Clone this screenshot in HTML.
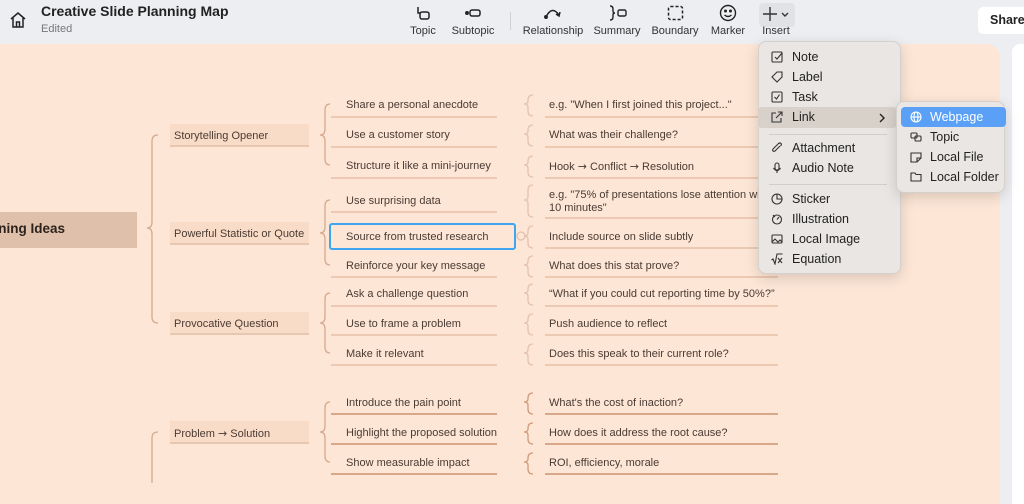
<!DOCTYPE html>
<html><head><meta charset="utf-8"><style>
*{margin:0;padding:0;box-sizing:border-box}
body{width:1024px;height:483px;overflow:hidden;background:#eceef1;font-family:"Liberation Sans",sans-serif;position:relative;color:#3c2f28}
.a{position:absolute;white-space:nowrap}
.tb{font-size:11px;color:#333;text-align:center;width:80px;margin-left:-40px}
.canvas{position:absolute;left:0;top:44px;width:1000px;height:460px;background:#fde6d6;border-top-right-radius:14px;overflow:hidden}
.l1{position:absolute;left:170px;width:139px;height:23px;background:#f9dcc8;border-bottom:2px solid #e8c7b1;font-size:11px;padding:6px 4px;color:#4a3b33}
.t{position:absolute;font-size:11px;color:#4a3b33;white-space:nowrap;margin-top:2px}
.ar{font-family:"DejaVu Sans",sans-serif;font-size:11px}
.u2{position:absolute;left:331px;width:166px;height:2px;background:#ecc9b2}
.u3{position:absolute;left:545px;width:233px;height:2px;background:#ecc9b2}
.menu{position:absolute;background:#e9e6e3;border:1px solid #d4d0cc;border-radius:8px;box-shadow:0 4px 14px rgba(0,0,0,.15);font-size:12.5px;color:#222}
.mi{position:absolute;left:33px}
.ic{position:absolute;left:12px;width:12px;height:12px}
</style></head><body>
<svg class="a" style="left:9px;top:11px" width="18" height="18" viewBox="0 0 18 18" fill="none" stroke="#222" stroke-width="1.5"><path d="M2 8 L9 2 L16 8 M4 7 V16 H14 V7 M7.5 16 V11 H10.5 V16"/></svg>
<div class="a" style="left:41px;top:3px;font-size:14px;font-weight:bold;color:#222">Creative Slide Planning Map</div>
<div class="a" style="left:41px;top:23px;font-size:11px;color:#777">Edited</div>

<svg class="a" style="left:414px;top:6px" width="18" height="16" viewBox="0 0 18 16" fill="none" stroke="#222" stroke-width="1.5"><path d="M4 1 V7 H7"/><rect x="6" y="6" width="9" height="7" rx="2"/></svg>
<div class="a tb" style="left:423px;top:25px">Topic</div>
<svg class="a" style="left:464px;top:6px" width="18" height="16" viewBox="0 0 18 16" fill="none" stroke="#222" stroke-width="1.5"><circle cx="3" cy="7" r="1.2" fill="#222"/><rect x="6" y="4" width="10" height="6" rx="2"/></svg>
<div class="a tb" style="left:473px;top:25px">Subtopic</div>
<div class="a" style="left:510px;top:12px;width:1px;height:18px;background:#d0d0d0"></div>
<svg class="a" style="left:543px;top:5px" width="20" height="16" viewBox="0 0 20 16" fill="none" stroke="#222" stroke-width="1.5"><path d="M3 12 Q9 0 16 10"/><path d="M13 9 L16 11 L17 7"/><circle cx="3" cy="12" r="1.2" fill="#222"/></svg>
<div class="a tb" style="left:553px;top:25px">Relationship</div>
<svg class="a" style="left:608px;top:5px" width="20" height="16" viewBox="0 0 20 16" fill="none" stroke="#222" stroke-width="1.4"><path d="M2 1 Q5 1 5 4 V6 Q5 8 7 8 Q5 8 5 10 V12 Q5 15 2 15"/><rect x="10" y="5" width="8" height="6" rx="1.5"/></svg>
<div class="a tb" style="left:617px;top:25px">Summary</div>
<svg class="a" style="left:667px;top:5px" width="17" height="16" viewBox="0 0 17 16" fill="none" stroke="#222" stroke-width="1.5" stroke-dasharray="3 2"><rect x="1.5" y="1.5" width="14" height="13" rx="2"/></svg>
<div class="a tb" style="left:675px;top:25px">Boundary</div>
<svg class="a" style="left:719px;top:4px" width="18" height="18" viewBox="0 0 18 18" fill="none" stroke="#222" stroke-width="1.4"><circle cx="9" cy="9" r="7.5"/><circle cx="6.5" cy="7" r=".8" fill="#222"/><circle cx="11.5" cy="7" r=".8" fill="#222"/><path d="M5.5 11 Q9 14 12.5 11"/></svg>
<div class="a tb" style="left:728px;top:25px">Marker</div>
<div class="a" style="left:759px;top:3px;width:36px;height:24px;background:#e0e2e6;border-radius:4px"></div>
<svg class="a" style="left:761px;top:5px" width="32" height="18" viewBox="0 0 32 18" fill="none" stroke="#333" stroke-width="1.4"><path d="M9 2 V16 M2 9 H16"/><path d="M21 8 L24 11 L27 8"/></svg>
<div class="a tb" style="left:776px;top:25px">Insert</div>
<div class="a" style="left:978px;top:7px;width:60px;height:27px;background:#fff;border-radius:5px;font-size:12.5px;font-weight:bold;padding:6px 12px;color:#222">Share</div>
<div class="a" style="left:1012px;top:44px;width:20px;height:460px;background:#fff;border-radius:8px 0 0 0"></div>

<div class="canvas">
<div style="position:relative;top:-44px">
<svg class="a" style="left:0;top:0" width="1000" height="483" fill="none" stroke="#d5aa8e" stroke-width="1.3">
<path d="M158 135 Q152 135 152 141 V222 Q152 228 147 228 Q152 228 152 234 V317 Q152 323 158 323"/>
<path d="M158 432 Q152 432 152 438 V490"/>
<path d="M330 104 Q325 104 325 110 V129 Q325 135 320 135 Q325 135 325 141 V159 Q325 165 330 165"/>
<path d="M330 200 Q325 200 325 206 V227 Q325 233 320 233 Q325 233 325 239 V259 Q325 265 330 265"/>
<path d="M330 293 Q325 293 325 299 V317 Q325 323 320 323 Q325 323 325 329 V347 Q325 353 330 353"/>
<path d="M330 402 Q325 402 325 408 V426 Q325 432 320 432 Q325 432 325 438 V456 Q325 462 330 462"/>
<g stroke="#e3c2ac">
<path d="M533 95 Q528 95 528 100 V101 Q528 104 524 104 Q528 104 528 107 V111 Q528 116 533 116"/>
<path d="M533 125 Q528 125 528 130 V131 Q528 134 524 134 Q528 134 528 137 V141 Q528 146 533 146"/>
<path d="M533 156 Q528 156 528 161 V162 Q528 165 524 165 Q528 165 528 168 V172 Q528 177 533 177"/>
<path d="M533 185 Q528 185 528 190 V197 Q528 200 524 200 Q528 200 528 203 V212 Q528 217 533 217"/>
<path d="M533 226 Q528 226 528 231 V233 Q528 236 524 236 Q528 236 528 239 V243 Q528 248 533 248"/>
<path d="M533 256 Q528 256 528 261 V262 Q528 265 524 265 Q528 265 528 268 V272 Q528 277 533 277"/>
<path d="M533 284 Q528 284 528 289 V290 Q528 293 524 293 Q528 293 528 296 V300 Q528 305 533 305"/>
<path d="M533 314 Q528 314 528 319 V320 Q528 323 524 323 Q528 323 528 326 V330 Q528 335 533 335"/>
<path d="M533 344 Q528 344 528 349 V350 Q528 353 524 353 Q528 353 528 356 V360 Q528 365 533 365"/>
</g>
<g stroke="#cf9a7a">
<path d="M533 393 Q528 393 528 398 V399 Q528 402 524 402 Q528 402 528 405 V409 Q528 414 533 414"/>
<path d="M533 423 Q528 423 528 428 V429 Q528 432 524 432 Q528 432 528 435 V439 Q528 444 533 444"/>
<path d="M533 453 Q528 453 528 458 V459 Q528 462 524 462 Q528 462 528 465 V469 Q528 474 533 474"/>
</g>
<circle cx="521" cy="236" r="4" stroke="#e0c0aa"/>
</svg>
<div class="a" style="left:0;top:212px;width:137px;height:36px;background:#dfc1ab;overflow:hidden"><div class="a" style="left:-28px;top:9px;font-size:13.5px;font-weight:bold;color:#2d221c">Opening Ideas</div></div>
<div class="l1" style="top:124px">Storytelling Opener</div>
<div class="l1" style="top:222px">Powerful Statistic or Quote</div>
<div class="l1" style="top:312px">Provocative Question</div>
<div class="l1" style="top:421px">Problem <span class="ar">→</span> Solution</div>

<div class="t" style="left:346px;top:97px">Share a personal anecdote</div><div class="u2" style="top:116px"></div>
<div class="t" style="left:346px;top:127px">Use a customer story</div><div class="u2" style="top:146px"></div>
<div class="t" style="left:346px;top:158px">Structure it like a mini-journey</div><div class="u2" style="top:177px"></div>
<div class="t" style="left:346px;top:193px">Use surprising data</div><div class="u2" style="top:211px"></div>
<div class="a" style="left:329px;top:223px;width:187px;height:27px;border:2px solid #3ea6f0;border-radius:3px"></div>
<div class="t" style="left:346px;top:229px">Source from trusted research</div>
<div class="t" style="left:346px;top:258px">Reinforce your key message</div><div class="u2" style="top:276px"></div>
<div class="t" style="left:346px;top:286px">Ask a challenge question</div><div class="u2" style="top:305px"></div>
<div class="t" style="left:346px;top:316px">Use to frame a problem</div><div class="u2" style="top:334px"></div>
<div class="t" style="left:346px;top:346px">Make it relevant</div><div class="u2" style="top:364px"></div>
<div class="t" style="left:346px;top:395px">Introduce the pain point</div><div class="u2" style="top:413px;background:#d9a88a"></div>
<div class="t" style="left:346px;top:425px">Highlight the proposed solution</div><div class="u2" style="top:443px;background:#d9a88a"></div>
<div class="t" style="left:346px;top:455px">Show measurable impact</div><div class="u2" style="top:473px;background:#d9a88a"></div>

<div class="t" style="left:549px;top:97px">e.g. "When I first joined this project..."</div><div class="u3" style="top:116px"></div>
<div class="t" style="left:549px;top:127px">What was their challenge?</div><div class="u3" style="top:146px"></div>
<div class="t" style="left:549px;top:158px">Hook <span class="ar">→</span> Conflict <span class="ar">→</span> Resolution</div><div class="u3" style="top:177px"></div>
<div class="t" style="left:549px;top:187px">e.g. "75% of presentations lose attention within</div>
<div class="t" style="left:549px;top:200px">10 minutes"</div><div class="u3" style="top:217px"></div>
<div class="t" style="left:549px;top:229px">Include source on slide subtly</div><div class="u3" style="top:247px"></div>
<div class="t" style="left:549px;top:258px">What does this stat prove?</div><div class="u3" style="top:276px"></div>
<div class="t" style="left:549px;top:286px">“What if you could cut reporting time by 50%?”</div><div class="u3" style="top:305px"></div>
<div class="t" style="left:549px;top:316px">Push audience to reflect</div><div class="u3" style="top:334px"></div>
<div class="t" style="left:549px;top:346px">Does this speak to their current role?</div><div class="u3" style="top:364px"></div>
<div class="t" style="left:549px;top:395px">What's the cost of inaction?</div><div class="u3" style="top:413px;background:#d9a88a"></div>
<div class="t" style="left:549px;top:425px">How does it address the root cause?</div><div class="u3" style="top:443px;background:#d9a88a"></div>
<div class="t" style="left:549px;top:455px">ROI, efficiency, morale</div><div class="u3" style="top:473px;background:#d9a88a"></div>
</div></div>

<div class="menu" style="left:758px;top:41px;width:143px;height:233px">
<svg class="ic" style="top:9px" viewBox="0 0 12 12" fill="none" stroke="#333" stroke-width="1.1"><rect x="1" y="1" width="10" height="10" rx="1"/><path d="M4 6 L6 8 L11 2"/></svg><div class="mi" style="top:8px">Note</div>
<svg class="ic" style="top:29px" viewBox="0 0 12 12" fill="none" stroke="#333" stroke-width="1.1"><path d="M6 1 H11 V6 L6 11 L1 6 Z"/></svg><div class="mi" style="top:28px">Label</div>
<svg class="ic" style="top:49px" viewBox="0 0 12 12" fill="none" stroke="#333" stroke-width="1.1"><rect x="1" y="1" width="10" height="10" rx="1"/><path d="M3.5 6 L5.5 8 L8.5 3.5"/></svg><div class="mi" style="top:48px">Task</div>
<div class="a" style="left:-1px;top:65px;width:139px;height:21px;background:#d8d1ca;border-radius:4px"></div>
<svg class="ic" style="top:69px" viewBox="0 0 12 12" fill="none" stroke="#333" stroke-width="1.1"><path d="M5 2 H1 V11 H10 V7 M7 1 H11 V5 M11 1 L5 7"/></svg><div class="mi" style="top:68px">Link</div>
<svg class="a" style="left:119px;top:71px" width="8" height="10" viewBox="0 0 8 10" fill="none" stroke="#222" stroke-width="1.4"><path d="M2 1 L6 5 L2 9"/></svg>
<div class="a" style="left:10px;top:92px;width:118px;height:1px;background:#d2cdc8"></div>
<svg class="ic" style="top:100px" viewBox="0 0 12 12" fill="none" stroke="#333" stroke-width="1.1"><path d="M9 4 L4.5 8.5 Q3 10 2 9 Q1 8 2.5 6.5 L7.5 1.5 Q9 0.5 10 1.5 Q11 2.5 9.5 4"/></svg><div class="mi" style="top:99px">Attachment</div>
<svg class="ic" style="top:120px" viewBox="0 0 12 12" fill="none" stroke="#333" stroke-width="1.1"><rect x="4" y="1" width="4" height="7" rx="2"/><path d="M2.5 6 Q6 11 9.5 6 M6 9 V11"/></svg><div class="mi" style="top:119px">Audio Note</div>
<div class="a" style="left:10px;top:142px;width:118px;height:1px;background:#d2cdc8"></div>
<svg class="ic" style="top:151px" viewBox="0 0 12 12" fill="none" stroke="#333" stroke-width="1.1"><circle cx="6" cy="6" r="5"/><path d="M6 1 V6 H11"/></svg><div class="mi" style="top:150px">Sticker</div>
<svg class="ic" style="top:171px" viewBox="0 0 12 12" fill="none" stroke="#333" stroke-width="1.1"><circle cx="6" cy="6.5" r="4.5"/><path d="M2 2 L4 4 M6 6.5 L8 4"/></svg><div class="mi" style="top:170px">Illustration</div>
<svg class="ic" style="top:191px" viewBox="0 0 12 12" fill="none" stroke="#333" stroke-width="1.1"><rect x="1" y="2" width="10" height="8" rx="1"/><path d="M1 9 L4 6 L7 9 L9 7 L11 9"/></svg><div class="mi" style="top:190px">Local Image</div>
<svg class="ic" style="top:211px" viewBox="0 0 12 12" fill="none" stroke="#333" stroke-width="1.1"><path d="M0.5 7 L2 6 L4 11 L6 1 H11.5 M7 5 L11 10 M11 5 L7 10"/></svg><div class="mi" style="top:210px">Equation</div>
</div>
<div class="menu" style="left:896px;top:101px;width:109px;height:92px">
<div class="a" style="left:4px;top:5px;width:105px;height:20px;background:#5aa0f7;border-radius:4px"></div>
<svg class="ic" style="top:9px;left:13px" viewBox="0 0 12 12" fill="none" stroke="#fff" stroke-width="1.1"><circle cx="6" cy="6" r="5"/><ellipse cx="6" cy="6" rx="2" ry="5"/><path d="M1 6 H11"/></svg><div class="mi" style="top:8px;color:#fff">Webpage</div>
<svg class="ic" style="top:29px;left:13px" viewBox="0 0 12 12" fill="none" stroke="#333" stroke-width="1.1"><rect x="1" y="2" width="6" height="5" rx="1"/><rect x="5" y="5" width="6" height="5" rx="1"/></svg><div class="mi" style="top:28px">Topic</div>
<svg class="ic" style="top:49px;left:13px" viewBox="0 0 12 12" fill="none" stroke="#333" stroke-width="1.1"><path d="M1 2 H11 V7 L7 11 H1 Z M7 11 V7 H11"/></svg><div class="mi" style="top:48px">Local File</div>
<svg class="ic" style="top:69px;left:13px" viewBox="0 0 12 12" fill="none" stroke="#333" stroke-width="1.1"><path d="M1 2 H5 L6 3.5 H11 V10 H1 Z"/></svg><div class="mi" style="top:68px">Local Folder</div>
</div>
</body></html>
